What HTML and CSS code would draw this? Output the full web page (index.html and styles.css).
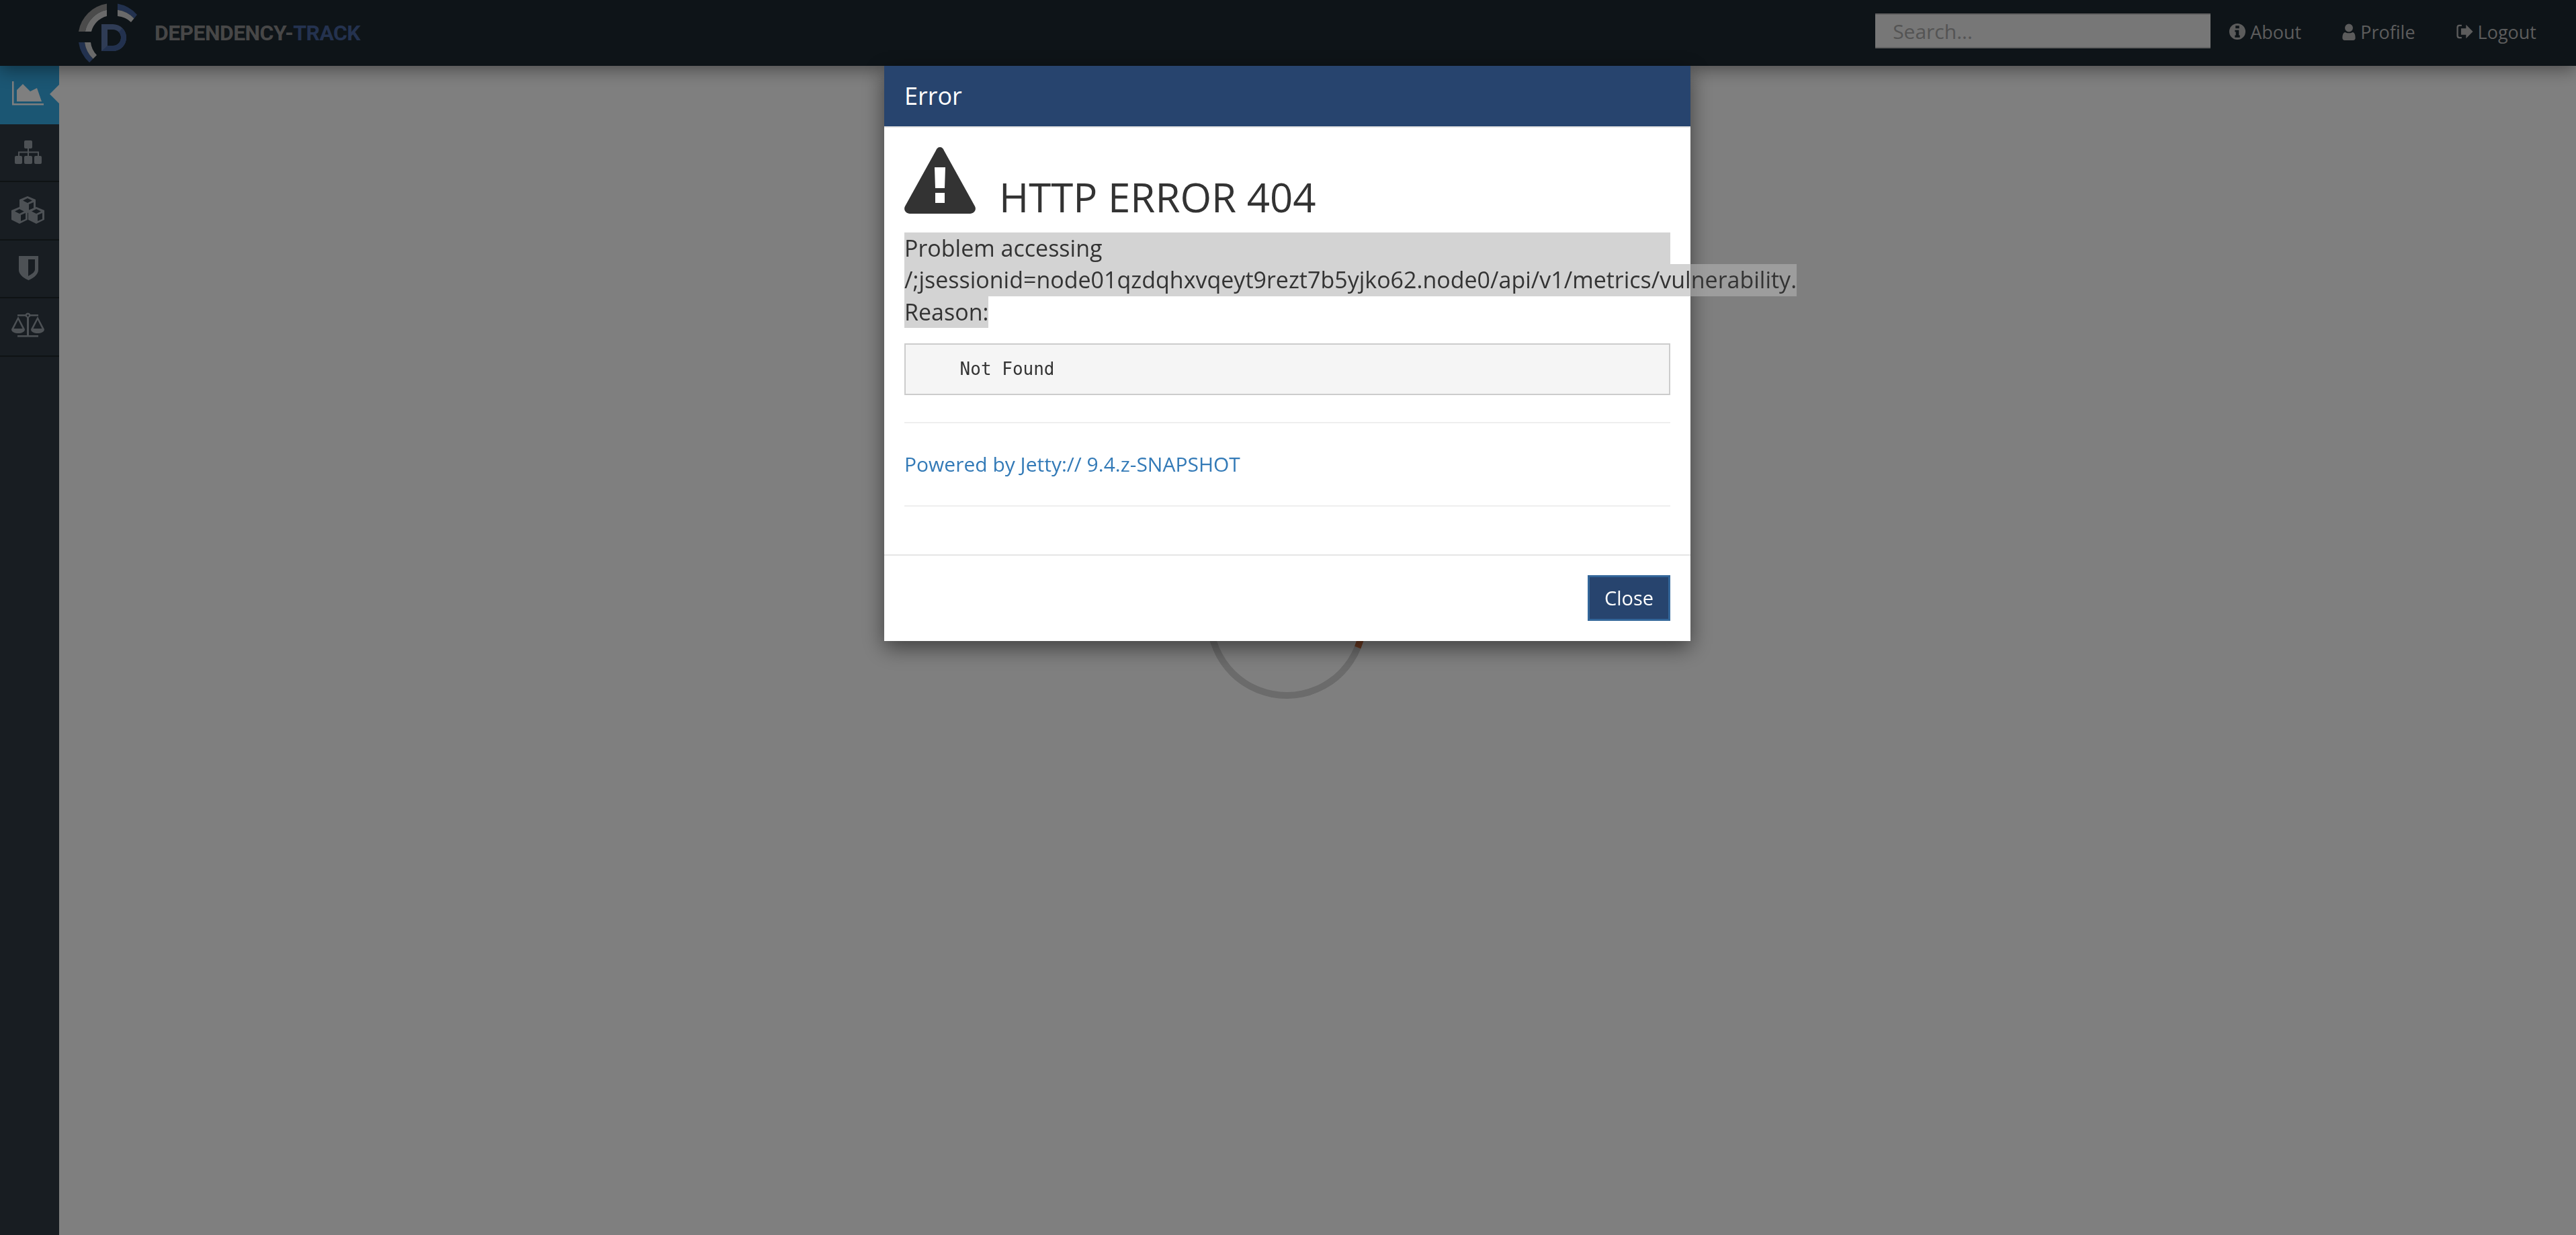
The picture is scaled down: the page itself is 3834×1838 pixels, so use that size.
FILE: index.html
```html
<!DOCTYPE html>
<html lang="en">
<head>
    <meta charset="UTF-8">
    <title>Dependency-Track</title>
    <link rel="stylesheet" href="styles.css">
</head>
<body>
    <header class="navbar">
        <a class="brand" href="#">
            <svg class="brand-mark" viewBox="110 0 100 98" width="100" height="98">
                <path class="arc-dark" d="M117 47A50 50 0 0 1 159 5.6L159 14.8A41 41 0 0 0 126.8 47Z"/>
                <path class="arc-light" d="M126.8 47A41 41 0 0 1 159 14.8L159 24A32 32 0 0 0 136 47Z"/>
                <path class="arc-blue" d="M175 5.6A50 50 0 0 1 204 22L199.5 27.5A41 41 0 0 0 175 14.8Z"/>
                <path class="arc-light" d="M175 14.8A41 41 0 0 1 199.5 27.5L195 33A32 32 0 0 0 175 24Z"/>
                <path class="arc-blue" d="M117 63A50 50 0 0 0 133 93L138.5 87.5A41 41 0 0 1 126 63Z"/>
                <path class="arc-light" d="M126 63A41 41 0 0 0 138.5 87.5L144 82A32 32 0 0 1 135 63Z"/>
                <path class="d-back" fill-rule="evenodd" d="M151 36H168A20 20 0 0 1 168 76H151ZM160 44V68H168A12 12 0 0 0 168 44Z"/>
                <path class="arc-blue" d="M182 41.700A20 20 0 0 1 168 76H151L160 68H168A12 12 0 0 0 177 48Z"/>
            </svg>
            <span class="brand-name">DEPENDENCY-<span class="brand-track">TRACK</span></span>
        </a>
        <input class="search" type="text" placeholder="Search...">
        <nav class="nav-links">
            <a class="nav-link" href="#">
                <svg class="nav-icon" viewBox="0 0 28 28" width="26" height="26"><path fill-rule="evenodd" d="M14 1a13 13 0 1 1 0 26a13 13 0 0 1 0-26ZM11 4.500V9H17V4.500ZM10 11.500V14.500H11.500V20H10V23.500H18V20H16.500V11.500Z"/></svg>
                About
            </a>
            <a class="nav-link" href="#">
                <svg class="nav-icon" viewBox="0 0 24 28" width="22" height="27"><path d="M12 1a6.500 6.500 0 1 1 0 13a6.500 6.500 0 0 1 0-13ZM6 14.500C8 16.500 16 16.500 18 14.500C21 15 22.500 18 22.500 24C22.500 26 21 27.500 19 27.500H5C3 27.500 1.500 26 1.500 24C1.500 18 3 15 6 14.500Z"/></svg>
                Profile
            </a>
            <a class="nav-link" href="#">
                <svg class="nav-icon" viewBox="0 0 28 28" width="27" height="26"><path d="M9 3V5.500H5.500C4.500 5.500 3.500 6.500 3.500 7.500V20.500C3.500 21.500 4.500 22.500 5.500 22.500H9V25H5C2.500 25 1 23.500 1 21V7C1 4.500 2.500 3 5 3ZM16 3L27 14L16 25V19H8V9H16Z"/></svg>
                Logout
            </a>
        </nav>
    </header>

    <div class="layout">
        <aside class="sidebar">
            <a class="side-item side-item-active" href="#">
                <svg viewBox="0 0 88 86" width="88" height="86">
                    <path d="M18 23H20.500V56H65V58.500H18Z"/>
                    <path d="M25 53V36L34 27L45 38L55 33L62 53Z"/>
                </svg>
            </a>
            <a class="side-item" href="#">
                <svg viewBox="0 0 88 86" width="88" height="86">
                    <rect x="36" y="24" width="12" height="12" rx="2"/>
                    <rect x="22" y="47" width="11" height="12" rx="2"/>
                    <rect x="36" y="47" width="12" height="12" rx="2"/>
                    <rect x="51" y="47" width="11" height="12" rx="2"/>
                    <path d="M41 36H43V40.500H58V47H56V42.500H43V47H41V42.500H29V47H27V40.500H41Z"/>
                </svg>
            </a>
            <a class="side-item" href="#">
                <svg viewBox="0 0 88 86" width="88" height="86">
                    <g fill-rule="evenodd">
                        <path d="M41 21L53 26V40L41 46L29 40V26ZM41 24L34 27.500L41 31L48 27.500ZM43 33V42L50 39V30Z"/>
                        <path d="M29 37L41 42V56L29 62L17 56V42ZM29 40L22 43.500L29 47L36 43.500ZM31 49V58L38 55V46Z"/>
                        <path d="M54 37L66 42V56L54 62L42 56V42ZM54 40L47 43.500L54 47L61 43.500ZM56 49V58L63 55V46Z"/>
                    </g>
                </svg>
            </a>
            <a class="side-item" href="#">
                <svg viewBox="0 0 88 86" width="88" height="86">
                    <path fill-rule="evenodd" d="M28 23H57V44C57 51 48 57 42.500 59C37 57 28 51 28 44ZM42 28V53C47 50 52 47 52 43V28Z"/>
                </svg>
            </a>
            <a class="side-item" href="#">
                <svg viewBox="0 0 88 86" width="88" height="86">
                    <path fill-rule="evenodd" d="M41.500 21.500a4 4 0 0 1 3.800 2.500H57V26.500H45.300a4 4 0 0 1-2.300 2V55H57V57.500H26V55H40V28.500a4 4 0 0 1-2.300-2H26V24H37.700a4 4 0 0 1 3.800-2.500ZM41.500 24a1.500 1.500 0 1 0 0 3a1.500 1.500 0 0 0 0-3Z"/>
                    <path fill-rule="evenodd" d="M27 27L37 46C37 50 32 52 27 52C22 52 17 50 17 46ZM27 32L20.500 45H33.500Z"/>
                    <path fill-rule="evenodd" d="M56 27L66 46C66 50 61 52 56 52C51 52 46 50 46 46ZM56 32L49.500 45H62.500Z"/>
                </svg>
            </a>
        </aside>
        <main class="content">
            <div class="spinner"></div>
        </main>
    </div>

    <div class="backdrop">
        <div class="modal">
            <div class="modal-header">Error</div>
            <div class="modal-body">
                <h1 class="error-title">
                    <svg class="warn-icon" viewBox="0 0 106 99" width="106" height="99">
                        <path fill-rule="evenodd" d="M53 0C56 0 58 2 59 5L105 88C108 94 103 99 98 99H8C3 99 -2 94 1 88L47 5C48 2 50 0 53 0ZM45 30L46 61H60L61 30ZM46 68V83H60V68Z"/>
                    </svg>
                    <span>HTTP ERROR 404</span>
                </h1>
                <div class="message">
                    <span class="sel sel-full">Problem accessing</span>
                    <span class="sel">/;jsessionid=node01qzdqhxvqeyt9rezt7b5yjko62.node0/api/v1/metrics/vulnerability.</span>
                    <span class="sel">Reason:</span>
                </div>
                <pre class="reason">    Not Found</pre>
                <hr class="rule">
                <a class="powered" href="#">Powered by Jetty:// 9.4.z-SNAPSHOT</a>
                <hr class="rule">
            </div>
            <div class="modal-footer">
                <button class="btn-close" type="button">Close</button>
            </div>
        </div>
    </div>
</body>
</html>
```

FILE: styles.css
```css
* {
    margin: 0;
    padding: 0;
    box-sizing: border-box;
}
body {
    font-family: "Open Sans", sans-serif;
    font-size: 34px;
    color: #333;
    height: 100vh;
    overflow: hidden;
    display: flex;
    flex-direction: column;
    background-color: #fff;
}
a {
    text-decoration: none;
}

/* top bar */
.navbar {
    position: relative;
    z-index: 2;
    flex: none;
    height: 98px;
    padding-left: 110px;
    padding-right: 59px;
    display: flex;
    align-items: center;
    background-color: #1c2830;
    box-shadow: 0 6px 24px rgba(0, 0, 0, 0.4);
}
.brand {
    display: flex;
    align-items: center;
    margin-right: auto;
}
.brand-mark {
    display: block;
}
.brand-name {
    margin-left: 20px;
    font-family: Roboto, sans-serif;
    font-size: 32px;
    font-weight: 700;
    letter-spacing: -0.6px;
    color: #8e8e8e;
}
.brand-track {
    color: #48649e;
}
.arc-dark {
    fill: #969696;
}
.arc-light {
    fill: #d4d4d4;
}
.arc-blue {
    fill: #44639c;
}
.d-back {
    fill: #5e78aa;
}
.search {
    width: 499px;
    height: 52px;
    margin-bottom: 6px;
    padding: 0 26px;
    font-family: inherit;
    font-size: 30px;
    background-color: #eee;
    border: 2px solid #c4c4c4;
    border-left: none;
    border-right: none;
}
.search::placeholder {
    color: #a8a8a8;
}
.nav-links {
    display: flex;
    margin-left: 27px;
    margin-bottom: 4px;
    gap: 60px;
}
.nav-link {
    display: flex;
    align-items: center;
    gap: 6px;
    font-size: 27px;
    color: #b8b8b8;
}
.nav-icon {
    fill: #b8b8b8;
}

/* sidebar and page behind the dialog */
.layout {
    flex: 1;
    display: flex;
    min-height: 0;
}
.sidebar {
    flex: none;
    width: 88px;
    background-color: #303a44;
}
.side-item {
    position: relative;
    display: block;
    height: 86.500px;
    border-bottom: 2px solid #1c2429;
}
.side-item svg {
    display: block;
    fill: #9aa3ab;
}
.side-item-active {
    background-color: #36ace6;
    border-bottom: none;
}
.side-item-active svg {
    fill: #fff;
}
.side-item-active::after {
    content: "";
    position: absolute;
    right: 0;
    top: 28px;
    border: 14px solid transparent;
    border-left: none;
    border-right-color: #fff;
}
.content {
    flex: 1;
    padding-top: 704px;
    padding-left: 1708px;
}
.spinner {
    width: 238px;
    height: 238px;
    border: 10px solid #d6d6d6;
    border-right-color: #d47444;
    border-radius: 50%;
    transform: rotate(-23deg);
}

/* dialog */
.backdrop {
    position: fixed;
    z-index: 5;
    top: 0;
    left: 0;
    right: 0;
    bottom: 0;
    padding-top: 98px;
    padding-right: 2px;
    background-color: rgba(0, 0, 0, 0.5);
}
.modal {
    width: 1200px;
    margin: 0 auto;
    background-color: #fff;
    box-shadow: 0 10px 30px rgba(0, 0, 0, 0.5);
}
.modal-header {
    height: 92px;
    padding: 0 30px;
    line-height: 90px;
    font-size: 36px;
    color: #fff;
    background-color: #27446e;
    border-bottom: 2px solid #e5e5e5;
}
.modal-body {
    height: 635px;
    padding: 29px 30px 0;
}
.error-title {
    display: flex;
    align-items: flex-end;
    height: 127px;
    padding-bottom: 28px;
    font-size: 60px;
    font-weight: 400;
    line-height: 1;
}
.error-title span {
    margin-left: 35px;
    margin-bottom: -5px;
}
.warn-icon {
    fill: #333;
}
.message {
    line-height: 47.300px;
}
.sel {
    display: block;
    width: max-content;
    white-space: nowrap;
    background-color: rgba(180, 180, 180, 0.58);
}
.sel-full {
    width: auto;
}
.reason {
    height: 77px;
    margin-top: 23px;
    padding: 0 18px;
    font-family: "DejaVu Sans Mono", monospace;
    font-size: 26px;
    line-height: 73px;
    background-color: #f5f5f5;
    border: 2px solid #ccc;
}
.rule {
    height: 2px;
    margin-top: 40px;
    border: none;
    background-color: #eee;
}
.powered {
    display: block;
    height: 122px;
    line-height: 122px;
    font-size: 30px;
    color: #337ab7;
}
.powered + .rule {
    margin-top: 0;
}
.modal-footer {
    height: 129px;
    padding: 29px 30px 0;
    display: flex;
    justify-content: flex-end;
    align-items: flex-start;
    border-top: 2px solid #e5e5e5;
}
.btn-close {
    width: 123px;
    height: 68px;
    font-family: inherit;
    font-size: 29px;
    line-height: 60px;
    color: #fff;
    background-color: #27446e;
    border: 3px solid #336699;
}
```
